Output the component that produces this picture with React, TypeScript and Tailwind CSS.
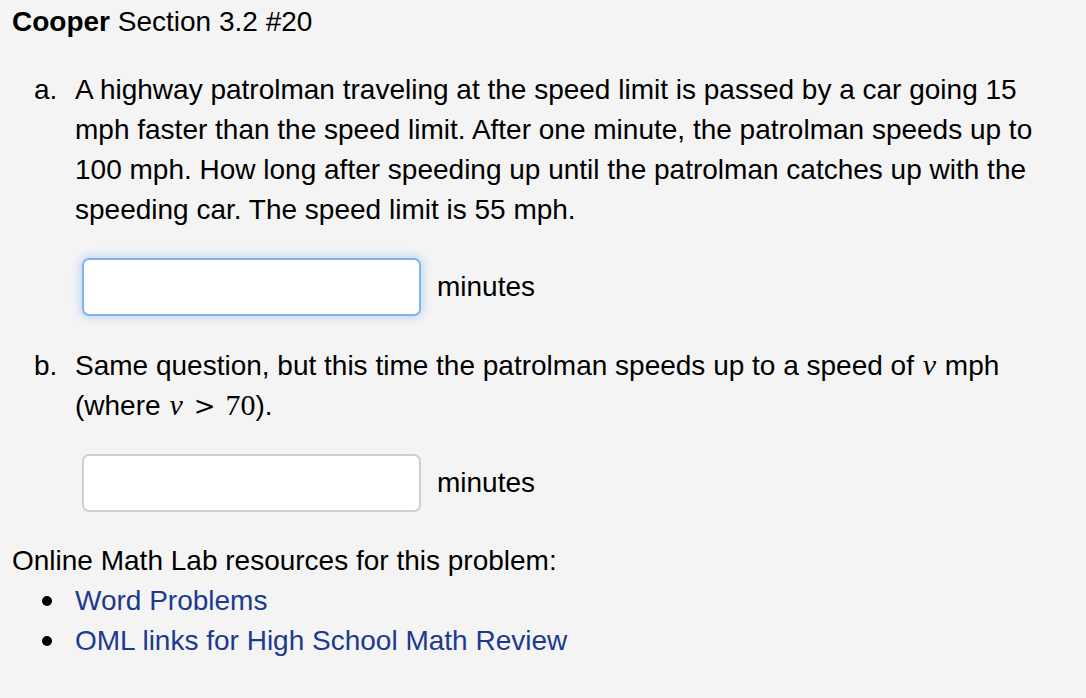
import React from 'react';

const resources = ['Word Problems', 'OML links for High School Math Review'];

const AnswerBox = ({ focused }: { focused?: boolean }) => (
  <div className="flex items-center gap-4">
    <input
      type="text"
      className={`w-[339px] h-[58px] rounded-[7px] bg-white outline-none border-2 ${
        focused
          ? 'border-[#80b3ec] shadow-[0_0_8px_2px_rgba(128,179,236,0.45)]'
          : 'border-[#cfcfcf]'
      }`}
    />
    <span>minutes</span>
  </div>
);

const MathV = () => (
  <span className="font-['Liberation_Serif',serif] italic text-[30px] leading-none px-[1px]">v</span>
);

export default function App() {
  return (
    <div className="min-h-screen bg-[#f4f4f4] text-black text-[28px] leading-[40px] font-['Liberation_Sans',Arial,sans-serif] pl-3 pr-[26px] pt-[2px]">
      <h1 className="font-normal">
        <b className="font-bold">Cooper</b> Section 3.2 #20
      </h1>

      <ol className="mt-7">
        <li className="flex">
          <span className="w-[63px] pl-[22px] shrink-0">a.</span>
          <div>
            <p>
              A highway patrolman traveling at the speed limit is passed by a car going 15 mph faster than the
              speed limit. After one minute, the patrolman speeds up to 100 mph. How long after speeding up
              until the patrolman catches up with the speeding car. The speed limit is 55 mph.
            </p>
            <div className="mt-7 ml-[7px]">
              <AnswerBox focused />
            </div>
          </div>
        </li>
        <li className="flex mt-[30px]">
          <span className="w-[63px] pl-[22px] shrink-0">b.</span>
          <div>
            <p>
              Same question, but this time the patrolman speeds up to a speed of <MathV /> mph (where <MathV />
              <span className="font-['DejaVu_Serif',serif] text-[26px] leading-none mx-[10px]">&gt;</span>
              <span className="font-['Liberation_Serif',serif] text-[30px] leading-none">70</span>).
            </p>
            <div className="mt-7 ml-[7px]">
              <AnswerBox />
            </div>
          </div>
        </li>
      </ol>

      <div className="mt-[29px]">
        <p>Online Math Lab resources for this problem:</p>
        <ul>
          {resources.map((r) => (
            <li key={r} className="flex items-center">
              <span className="w-[63px] shrink-0 flex justify-start pl-[30px]">
                <span className="w-[10px] h-[10px] rounded-full bg-black" />
              </span>
              <a href="#" className="text-[#1c3a8e]">
                {r}
              </a>
            </li>
          ))}
        </ul>
      </div>
    </div>
  );
}
